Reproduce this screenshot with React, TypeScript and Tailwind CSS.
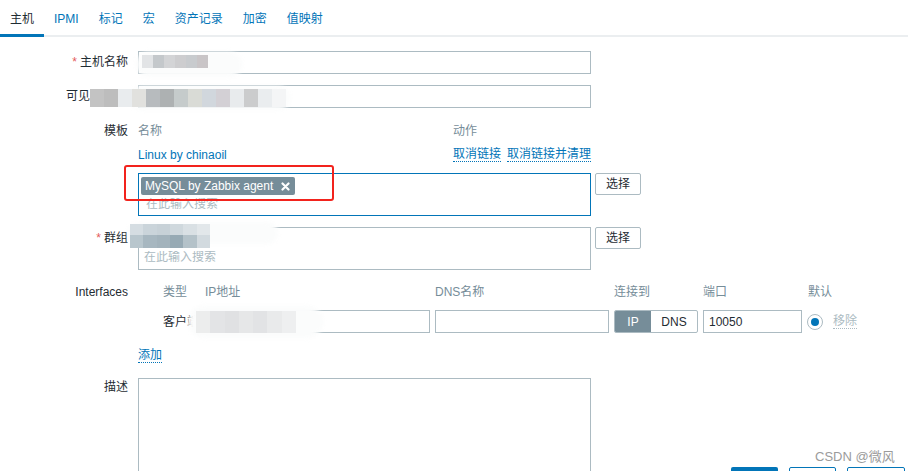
import React from "react";

const tabs = ["主机", "IPMI", "标记", "宏", "资产记录", "加密", "值映射"];

// pixelated blur patches that hide private data in the screenshot
const Mosaic = ({ cells, className }: { cells: string[]; className: string }) => (
  <div className={`pointer-events-none absolute flex ${className}`}>
    {cells.map((c, i) => (
      <div key={i} className="h-full flex-1" style={{ backgroundColor: c }} />
    ))}
  </div>
);

const Smudge = ({ className }: { className: string }) => (
  <div className={`pointer-events-none absolute rounded-full bg-[#fbfcfc] blur-[2px] ${className}`} />
);

const Label = ({ text, required }: { text: string; required?: boolean }) => (
  <div className="w-[128px] shrink-0 text-right leading-[23px]">
    {required && <span className="mr-[3px] text-[#e45959]">*</span>}
    {text}
  </div>
);

const SelectButton = () => (
  <button className="ml-[4px] h-[22px] w-[46px] rounded-[2px] border border-[#acbbc2] bg-white text-[12px] leading-[20px] text-[#1f2c33]">
    选择
  </button>
);

const Placeholder = () => (
  <div className="h-[13px] overflow-hidden pl-[5px]">
    <div className="-mt-[2px] leading-[16px] text-[#acbbc2]">在此输入搜索</div>
  </div>
);

export default function App() {
  return (
    <div className="relative h-[471px] w-[908px] overflow-hidden bg-white font-['Arial','Liberation_Sans','Noto_Sans_CJK_SC',sans-serif] text-[12px] text-[#1f2c33]">
      {/* tabs */}
      <nav className="flex h-[37px] border-b-2 border-[#ebeef0]">
        {tabs.map((t, i) => (
          <div
            key={t}
            className={
              i === 0
                ? "-mb-[2px] flex h-[37px] items-center border-b-[3px] border-[#0275b8] px-[10px] pt-[3px] text-[#1f2c33]"
                : "flex h-[35px] items-center px-[10px] pt-[3px] text-[#0275b8]"
            }
          >
            {t}
          </div>
        ))}
      </nav>

      <div className="flex flex-col pt-[14px]">
        {/* host name */}
        <div className="flex">
          <Label text="主机名称" required />
          <div className="ml-[10px] h-[23px] w-[453px] border border-[#acbbc2]" />
        </div>

        {/* visible name */}
        <div className="mt-[11px] flex">
          <div className="w-[128px] shrink-0 pl-[66px] leading-[23px]">可见的名称</div>
          <div className="ml-[10px] h-[23px] w-[453px] border border-[#acbbc2]" />
        </div>

        {/* templates */}
        <div className="mt-[11px] flex">
          <div className="w-[128px] shrink-0 text-right leading-[24px]">模板</div>
          <div className="ml-[10px] w-[453px]">
            <div className="flex h-[24px] items-center text-[#768d99]">
              <div className="w-[315px]">名称</div>
              <div>动作</div>
            </div>
            <div className="flex h-[24px] items-center">
              <div className="w-[315px] text-[#0275b8]">Linux by chinaoil</div>
              <div className="flex gap-[6px] text-[#0275b8]">
                <span className="border-b border-dotted border-[#0275b8] leading-[13px]">取消链接</span>
                <span className="border-b border-dotted border-[#0275b8] leading-[13px]">取消链接并清理</span>
              </div>
            </div>
          </div>
        </div>

        <div className="mt-[6px] flex items-start">
          <div className="w-[128px] shrink-0" />
          <div className="ml-[10px] h-[43px] w-[453px] border border-[#0275b8] px-[2px] pt-[3px]">
            <div className="flex h-[18px] w-fit items-center gap-[8px] rounded-[2px] bg-[#768d99] pl-[4px] pr-[5px] text-white">
              <span>MySQL by Zabbix agent</span>
              <svg width="9" height="9" viewBox="0 0 9 9">
                <path d="M1.5 1.5 L7.5 7.5 M7.5 1.5 L1.5 7.5" stroke="white" strokeWidth="2.2" strokeLinecap="round" />
              </svg>
            </div>
            <div className="mt-[3px]">
              <Placeholder />
            </div>
          </div>
          <SelectButton />
        </div>

        {/* groups */}
        <div className="mt-[11px] flex items-start">
          <div className="w-[128px] shrink-0 text-right leading-[23px]">
            <span className="mr-[3px] text-[#e45959]">*</span>群组
          </div>
          <div className="ml-[10px] h-[43px] w-[453px] border border-[#acbbc2] pt-[23px]">
            <Placeholder />
          </div>
          <SelectButton />
        </div>

        {/* interfaces */}
        <div className="mt-[11px] flex h-[22px] items-center">
          <div className="w-[128px] shrink-0 text-right">Interfaces</div>
          <div className="ml-[10px] flex text-[#768d99]">
            <div className="w-[67px] pl-[25px]">类型</div>
            <div className="w-[230px]">IP地址</div>
            <div className="w-[179px]">DNS名称</div>
            <div className="w-[89px]">连接到</div>
            <div className="w-[105px]">端口</div>
            <div>默认</div>
          </div>
        </div>

        <div className="mt-[7px] flex items-center">
          <div className="w-[128px] shrink-0" />
          <div className="ml-[10px] flex items-center gap-[5px]">
            <div className="w-[62px] pl-[25px]">客户端</div>
            <div className="h-[23px] w-[225px] border border-[#acbbc2]" />
            <div className="h-[23px] w-[174px] border border-[#acbbc2]" />
            <div className="flex h-[23px] w-[84px] overflow-hidden rounded-[2px] border border-[#acbbc2]">
              <div className="flex w-[36px] items-center justify-center bg-[#768d99] text-white">IP</div>
              <div className="flex flex-1 items-center justify-center">DNS</div>
            </div>
            <div className="flex h-[23px] w-[99px] items-center border border-[#acbbc2] px-[5px]">10050</div>
            <div className="flex h-[16px] w-[16px] items-center justify-center rounded-full border border-[#acbbc2]">
              <div className="h-[8px] w-[8px] rounded-full bg-[#0275b8]" />
            </div>
            <span className="ml-[5px] border-b border-dotted border-[#acbbc2] leading-[14px] text-[#acbbc2]">移除</span>
          </div>
        </div>

        <div className="mt-[11px] flex h-[22px] items-center">
          <div className="w-[128px] shrink-0" />
          <span className="ml-[10px] border-b border-dotted border-[#0275b8] leading-[14px] text-[#0275b8]">添加</span>
        </div>

        {/* description */}
        <div className="mt-[12px] flex items-start">
          <div className="w-[128px] shrink-0 pt-[1px] text-right leading-[16px]">描述</div>
          <div className="ml-[10px] h-[110px] w-[453px] border border-[#acbbc2]" />
          <div className="ml-[140px] mt-[89px] flex gap-[11px]">
            <div className="h-[24px] w-[47px] rounded-[2px] bg-[#0275b8]" />
            <div className="h-[24px] w-[47px] rounded-[2px] border border-[#0275b8]" />
            <div className="h-[24px] w-[58px] rounded-[2px] border border-[#0275b8]" />
          </div>
        </div>
      </div>

      {/* blurred private data */}
      <Smudge className="left-[136px] top-[52px] h-[25px] w-[106px]" />
      <Mosaic className="left-[142px] top-[55px] h-[13px] w-[66px]" cells={["#e2e4e6", "#c4c8cb", "#d3d4d6", "#cdcdcf", "#c8cbce", "#c9c5c7"]} />

      <Smudge className="left-[130px] top-[86px] h-[24px] w-[160px]" />
      <Mosaic
        className="left-[90px] top-[89px] h-[18px] w-[196px]"
        cells={["#c3c3c3", "#bdbdbd", "#e9ecee", "#e1e1de", "#b7bbbe", "#adb1b2", "#c5cbcb", "#d9dbd6", "#d1d7dd", "#d3d0d5", "#e8ebed", "#cbcccd", "#eaedef", "#f4f5f6"]}
      />

      <Smudge className="left-[128px] top-[222px] h-[22px] w-[150px]" />
      <Mosaic className="left-[130px] top-[224px] h-[11px] w-[80px]" cells={["#d5dde2", "#cad4da", "#c7d1d7", "#cfd8dd", "#d9e0e4", "#e2e7ea"]} />
      <Mosaic className="left-[130px] top-[235px] h-[13px] w-[80px]" cells={["#b8c6cd", "#a7b7c0", "#a3b3bc", "#97aab4", "#b4c2c9", "#d2dadf"]} />

      <Smudge className="left-[188px] top-[306px] h-[32px] w-[135px]" />
      <Mosaic className="left-[196px] top-[311px] h-[22px] w-[100px]" cells={["#eceded", "#e3e4e6", "#e0e1e3", "#e6e7e8", "#e2e3e5", "#e9eaeb", "#eeeff0"]} />

      {/* red highlight */}
      <div className="pointer-events-none absolute left-[124px] top-[165px] h-[36px] w-[210px] rounded-[3px] border-2 border-[#f2231d]" />

      {/* watermark */}
      <div className="pointer-events-none absolute left-[815px] top-[447px] text-[13px] text-[#9b9b9b]">CSDN @微风</div>
    </div>
  );
}
